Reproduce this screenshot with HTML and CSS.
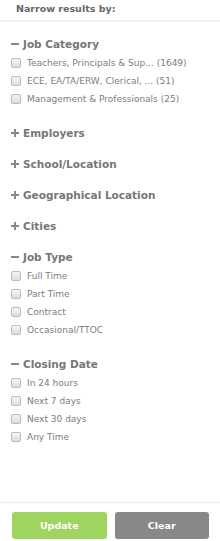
FILE: index.html
```html
<!DOCTYPE html>
<html lang="en">
<head>
    <meta charset="UTF-8">
    <meta name="viewport" content="width=device-width, initial-scale=1.0">
    <title>Narrow results</title>
    <link rel="stylesheet" href="styles.css">
</head>
<body>
    <div class="sidebar">
        <div class="sidebar-title">Narrow results by:</div>
        <div class="filters">
            <div class="filter open">
                <div class="filter-head">
                    <svg class="toggle" width="8" height="8" viewBox="0 0 8 8"><rect x="0" y="3" width="8" height="2"/></svg>
                    Job Category
                </div>
                <ul class="options">
                    <li><input type="checkbox"> Teachers, Principals &amp; Sup... (1649)</li>
                    <li><input type="checkbox"> ECE, EA/TA/ERW, Clerical, ... (51)</li>
                    <li><input type="checkbox"> Management &amp; Professionals (25)</li>
                </ul>
            </div>
            <div class="filter">
                <div class="filter-head">
                    <svg class="toggle" width="8" height="8" viewBox="0 0 8 8"><rect x="0" y="3" width="8" height="2"/><rect x="3" y="0" width="2" height="8"/></svg>
                    Employers
                </div>
            </div>
            <div class="filter">
                <div class="filter-head">
                    <svg class="toggle" width="8" height="8" viewBox="0 0 8 8"><rect x="0" y="3" width="8" height="2"/><rect x="3" y="0" width="2" height="8"/></svg>
                    School/Location
                </div>
            </div>
            <div class="filter">
                <div class="filter-head">
                    <svg class="toggle" width="8" height="8" viewBox="0 0 8 8"><rect x="0" y="3" width="8" height="2"/><rect x="3" y="0" width="2" height="8"/></svg>
                    Geographical Location
                </div>
            </div>
            <div class="filter">
                <div class="filter-head">
                    <svg class="toggle" width="8" height="8" viewBox="0 0 8 8"><rect x="0" y="3" width="8" height="2"/><rect x="3" y="0" width="2" height="8"/></svg>
                    Cities
                </div>
            </div>
            <div class="filter open">
                <div class="filter-head">
                    <svg class="toggle" width="8" height="8" viewBox="0 0 8 8"><rect x="0" y="3" width="8" height="2"/></svg>
                    Job Type
                </div>
                <ul class="options">
                    <li><input type="checkbox"> Full Time</li>
                    <li><input type="checkbox"> Part Time</li>
                    <li><input type="checkbox"> Contract</li>
                    <li><input type="checkbox"> Occasional/TTOC</li>
                </ul>
            </div>
            <div class="filter open">
                <div class="filter-head">
                    <svg class="toggle" width="8" height="8" viewBox="0 0 8 8"><rect x="0" y="3" width="8" height="2"/></svg>
                    Closing Date
                </div>
                <ul class="options">
                    <li><input type="checkbox"> In 24 hours</li>
                    <li><input type="checkbox"> Next 7 days</li>
                    <li><input type="checkbox"> Next 30 days</li>
                    <li><input type="checkbox"> Any Time</li>
                </ul>
            </div>
        </div>
        <div class="actions">
            <button class="btn btn-update">Update</button>
            <button class="btn btn-clear">Clear</button>
        </div>
    </div>
</body>
</html>
```

FILE: styles.css
```css
body {
    margin: 0;
    padding: 0;
    background-color: #fff;
    font-family: "DejaVu Sans", Verdana, sans-serif;
}

.sidebar {
    display: flex;
    flex-direction: column;
    width: 220px;
    height: 541px;
}

.sidebar-title {
    height: 20px;
    line-height: 18px;
    padding-left: 16px;
    font-size: 9.5px;
    font-weight: bold;
    color: #666;
    border-bottom: 2px solid #f3f3f3;
}

.filters {
    flex: 1;
    padding: 13px 0 0 11px;
}

.filter {
    margin-bottom: 13px;
}

.filter-head {
    display: flex;
    align-items: center;
    height: 18px;
    font-size: 10.5px;
    font-weight: bold;
    color: #777;
}

.toggle {
    fill: #888;
    margin-right: 4px;
}

.options {
    list-style: none;
    margin: 0;
    padding: 1px 0 3px 0;
}

.options li {
    display: flex;
    align-items: center;
    height: 18px;
    font-size: 9px;
    color: #7d7d7d;
}

.options input {
    appearance: none;
    -webkit-appearance: none;
    width: 10px;
    height: 10px;
    margin: 0 6px 0 0;
    border: 1px solid #bbb;
    border-radius: 2px;
    background: linear-gradient(#f6f6f6, #dcdcdc);
}

.actions {
    display: flex;
    gap: 8px;
    padding: 9px 11px 2px 12px;
    border-top: 1px solid #eee;
}

.btn {
    flex: 1;
    height: 27px;
    border: none;
    border-radius: 3px;
    color: #fff;
    font-family: "DejaVu Sans", Verdana, sans-serif;
    font-size: 9.5px;
    font-weight: bold;
}

.btn-update {
    background-color: #9fd461;
}

.btn-clear {
    background-color: #888;
}
```
